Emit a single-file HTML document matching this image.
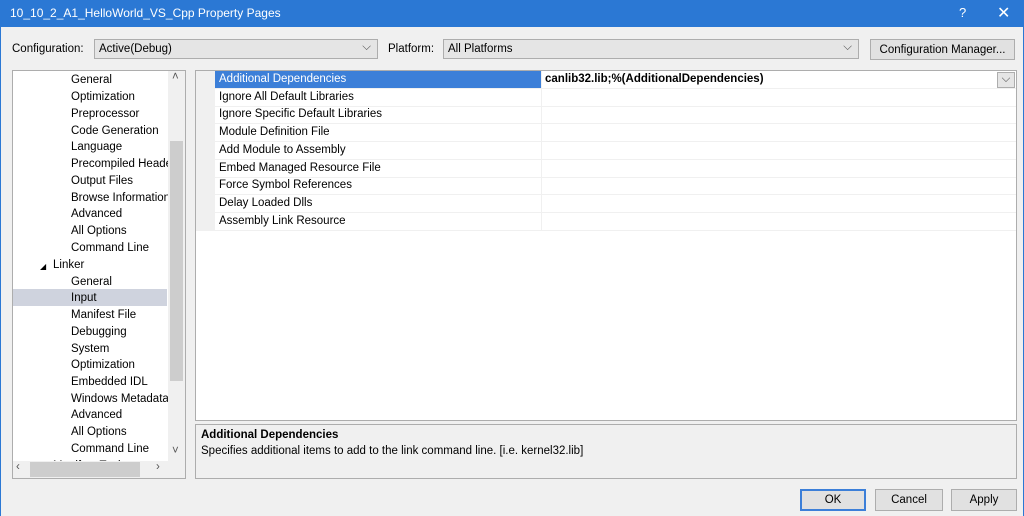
<!DOCTYPE html>
<html><head><style>
*{margin:0;padding:0;box-sizing:border-box}
body{width:1024px;height:516px;background:#f0f0f0;font-family:"Liberation Sans",sans-serif;font-size:11.5px;color:#000;position:relative;overflow:hidden;border-left:1px solid #2b78d4;border-right:1px solid #2b78d4}
.a{position:absolute}
.title{left:0;top:0;width:1024px;height:27px;background:#2b78d4;color:#fff;font-size:12px}
.combo{background:#e5e5e5;border:1px solid #adadad;height:20px}
.btn{background:#e1e1e1;border:1px solid #adadad;height:22px;text-align:center;line-height:20px}
.tree div{position:absolute;white-space:nowrap}
.t{margin-top:2px}
.row{position:absolute;left:0;width:820px;height:18px;border-bottom:1px solid #f0f0f0}
.row span{position:absolute;left:23px;top:2px}
</style></head><body>
<div class="a title"><span class="a" style="left:9px;top:6px">10_10_2_A1_HelloWorld_VS_Cpp Property Pages</span><span class="a" style="left:958px;top:5px;font-size:13px">?</span><span class="a" style="left:996px;top:3px;font-size:16px">✕</span></div>
<span class="a" style="left:11px;top:43px">Configuration:</span>
<div class="a combo" style="left:93px;top:39px;width:284px"><span class="a" style="left:4px;top:3px">Active(Debug)</span><span class="a" style="right:6px;top:1px;color:#555">⌵</span></div>
<span class="a" style="left:387px;top:43px">Platform:</span>
<div class="a combo" style="left:442px;top:39px;width:416px"><span class="a" style="left:4px;top:3px">All Platforms</span><span class="a" style="right:6px;top:1px;color:#555">⌵</span></div>
<div class="a btn" style="left:869px;top:39px;width:145px;height:21px">Configuration Manager...</div>

<div class="a tree" style="left:11px;top:70px;width:174px;height:409px;background:#fff;border:1px solid #adadad;overflow:hidden">
<div style="left:0;top:218px;width:154px;height:17px;background:#cfd3de"></div>
<div style="left:58px;top:3px">General</div><div style="left:58px;top:20px">Optimization</div><div style="left:58px;top:37px">Preprocessor</div><div style="left:58px;top:54px">Code Generation</div><div style="left:58px;top:70px">Language</div><div style="left:58px;top:87px">Precompiled Heade</div><div style="left:58px;top:104px">Output Files</div><div style="left:58px;top:121px">Browse Information</div><div style="left:58px;top:137px">Advanced</div><div style="left:58px;top:154px">All Options</div><div style="left:58px;top:171px">Command Line</div>
<div style="left:27px;font-size:8px;top:191px">◢</div><div style="left:40px;top:188px">Linker</div>
<div style="left:58px;top:205px">General</div>
<div style="left:58px;top:221px">Input</div><div style="left:58px;top:238px">Manifest File</div><div style="left:58px;top:255px">Debugging</div><div style="left:58px;top:272px">System</div><div style="left:58px;top:288px">Optimization</div><div style="left:58px;top:305px">Embedded IDL</div><div style="left:58px;top:322px">Windows Metadata</div><div style="left:58px;top:338px">Advanced</div><div style="left:58px;top:355px">All Options</div><div style="left:58px;top:372px">Command Line</div><div style="left:40px;top:389px">Manifest Tool</div>
<div style="left:155px;top:0;width:17px;height:390px;background:#f0f0f0"></div>
<div style="left:157px;top:70px;width:13px;height:240px;background:#cdcdcd"></div>
<div style="left:159px;top:0px;color:#555">˄</div><div style="left:159px;top:374px;color:#555">˅</div>
<div style="left:0;top:390px;width:172px;height:17px;background:#f0f0f0"></div>
<div style="left:17px;top:391px;width:110px;height:15px;background:#cdcdcd"></div>
<div style="left:3px;top:390px;color:#555">‹</div><div style="left:143px;top:390px;color:#555">›</div>
</div>

<div class="a" style="left:194px;top:70px;width:822px;height:351px;background:#fff;border:1px solid #adadad;overflow:hidden">
<div class="a" style="left:0;top:0;width:19px;height:160px;background:#f0f0f0"></div>
<div class="a" style="left:345px;top:0;width:1px;height:160px;background:#f0f0f0"></div>
<div class="row" style="top:0"><div class="a" style="left:19px;top:0;width:326px;height:17px;background:#3c7fd8"></div><span style="color:#fff">Additional Dependencies</span><b class="a" style="left:349px;top:2px">canlib32.lib;%(AdditionalDependencies)</b><div class="a" style="left:801px;top:1px;width:18px;height:16px;background:#e5e5e5;border:1px solid #adadad;text-align:center;color:#555;line-height:12px">⌵</div></div>
<div class="row" style="top:17.7px"><span>Ignore All Default Libraries</span></div>
<div class="row" style="top:35.4px"><span>Ignore Specific Default Libraries</span></div>
<div class="row" style="top:53.1px"><span>Module Definition File</span></div>
<div class="row" style="top:70.8px"><span>Add Module to Assembly</span></div>
<div class="row" style="top:88.5px"><span>Embed Managed Resource File</span></div>
<div class="row" style="top:106.2px"><span>Force Symbol References</span></div>
<div class="row" style="top:123.9px"><span>Delay Loaded Dlls</span></div>
<div class="row" style="top:141.6px"><span>Assembly Link Resource</span></div>
</div>

<div class="a" style="left:194px;top:424px;width:822px;height:55px;border:1px solid #adadad">
<b class="a" style="left:5px;top:4px">Additional Dependencies</b>
<span class="a" style="left:5px;top:20px">Specifies additional items to add to the link command line. [i.e. kernel32.lib]</span>
</div>

<div class="a btn" style="left:799px;top:489px;width:66px;border:2px solid #3c7fd8;line-height:18px">OK</div>
<div class="a btn" style="left:874px;top:489px;width:68px">Cancel</div>
<div class="a btn" style="left:950px;top:489px;width:66px">Apply</div>
</body></html>
